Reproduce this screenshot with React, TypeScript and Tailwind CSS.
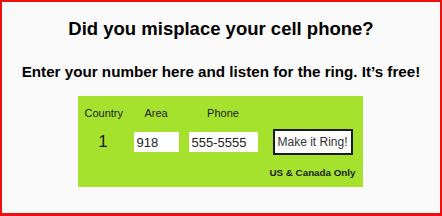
export default function App() {
  return (
    <div
      className="w-[442px] h-[216px] border-2 border-b-[3px] border-[#ee0f0f] bg-[#fafafa] flex flex-col items-center text-black"
      style={{ fontFamily: '"Liberation Sans", Arial, sans-serif' }}
    >
      <h1 className="mt-[16px] text-[18.5px] leading-[22px] font-bold">Did you misplace your cell phone?</h1>
      <h2 className="mt-[22px] text-[15.2px] leading-[20px] font-bold">
        Enter your number here and listen for the ring. It’s free!
      </h2>

      <div className="mt-[14px] w-[285px] h-[91px] bg-[#a6e22d] ml-[-2px] pl-[7px] pr-[7px] pt-[10px] text-[#1a1a1a]">
        <div className="flex items-center text-[11px] leading-[14px]">
          <div className="w-[37px] text-center">Country</div>
          <div className="ml-[12px] w-[45px] text-center">Area</div>
          <div className="ml-[10px] w-[69px] text-center">Phone</div>
        </div>
        <div className="mt-[9px] flex items-center">
          <div className="w-[37px] text-[17px] leading-[20px] text-center">1</div>
          <input
            defaultValue="918"
            className="ml-[12px] h-[20px] w-[45px] bg-white px-[3px] text-[13px] text-[#222] outline-none"
          />
          <input
            defaultValue="555-5555"
            className="ml-[10px] h-[20px] w-[69px] bg-white px-[3px] text-[13px] text-[#222] outline-none"
          />
          <button className="ml-[15px] h-[26px] w-[80px] border-2 border-[#1c1c1c] bg-white text-[12px] text-[#333]">
            Make it Ring!
          </button>
        </div>
        <div className="mt-[12px] text-right text-[9.8px] leading-[12px] font-bold">US &amp; Canada Only</div>
      </div>
    </div>
  )
}
